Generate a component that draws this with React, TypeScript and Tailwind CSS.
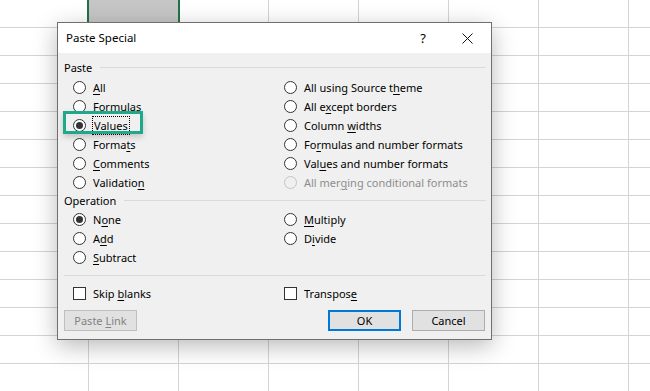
import React from "react";

const font = { fontFamily: '"Noto Sans", "Open Sans", sans-serif' };

function U({ children }: { children: React.ReactNode }) {
  return <span className="underline underline-offset-2 decoration-1">{children}</span>;
}

function Radio({ checked = false, disabled = false }: { checked?: boolean; disabled?: boolean }) {
  return (
    <span
      className={`flex h-[13px] w-[13px] shrink-0 items-center justify-center rounded-full border ${
        disabled ? "border-[#c4c4c4] bg-[#f0f0f0]" : "border-[#333333] bg-white"
      }`}
    >
      {checked && <span className="h-[7px] w-[7px] rounded-full bg-[#333333]" />}
    </span>
  );
}

function Opt({
  label,
  checked,
  disabled,
}: {
  label: React.ReactNode;
  checked?: boolean;
  disabled?: boolean;
}) {
  return (
    <div className={`flex h-[19px] items-center gap-[7px] ${disabled ? "text-[#8d8d8d]" : "text-black"}`}>
      <Radio checked={checked} disabled={disabled} />
      <span className="leading-none">{label}</span>
    </div>
  );
}

function Header({ label }: { label: string }) {
  return (
    <div className="flex h-[16px] items-center">
      <span className="leading-none">{label}</span>
      <span className="ml-[8px] h-px flex-1 bg-[#dadada]" />
    </div>
  );
}

function Check({ label }: { label: React.ReactNode }) {
  return (
    <div className="flex h-[18px] items-center gap-[7px]">
      <span className="h-[13px] w-[13px] shrink-0 border border-[#333333] bg-white" />
      <span className="leading-none">{label}</span>
    </div>
  );
}

export default function App() {
  const cols = [89, 90, 90, 90, 90, 90, 90, 90];
  const rows = 14;
  return (
    <div className="relative h-[391px] w-[650px] overflow-hidden bg-white text-[11px]" style={font}>
      {/* spreadsheet grid */}
      <div className="flex flex-col">
        {Array.from({ length: rows }).map((_, r) => (
          <div key={r} className="flex">
            {cols.map((w, c) => (
              <div
                key={c}
                className="h-[28px] shrink-0 border-b border-r border-[#d4d4d4]"
                style={{ width: w }}
              />
            ))}
          </div>
        ))}
      </div>

      {/* selected cell */}
      <div className="absolute left-[87px] top-[-10px] h-[40px] w-[93px] border-2 border-[#217346] bg-[#c6c6c6]" />

      {/* dialog */}
      <div className="absolute left-[57px] top-[22px] flex h-[318px] w-[435px] flex-col border border-[#6f6f6f] bg-[#f0f0f0] shadow-[0_6px_22px_rgba(0,0,0,0.28)]">
        {/* title bar */}
        <div className="flex h-[30px] items-center bg-white pl-[8px] text-black">
          <span className="text-[11.5px] leading-none">Paste Special</span>
          <span className="ml-auto mr-[36px] text-[13px] leading-none">?</span>
          <svg className="mr-[18px]" width="11" height="11" viewBox="0 0 11 11">
            <path d="M0.5 0.5 L10.5 10.5 M10.5 0.5 L0.5 10.5" stroke="#111" strokeWidth="1" />
          </svg>
        </div>

        {/* content */}
        <div className="relative flex flex-1 flex-col pl-[6px] pr-[5px] pt-[6px] text-black">
          <Header label="Paste" />
          <div className="mt-[3px] grid grid-cols-[211px_1fr] pl-[9px]">
            <div className="flex flex-col">
              <Opt label={<><U>A</U>ll</>} />
              <Opt label="Formulas" />
              <Opt
                checked
                label={
                  <span className="-mx-[1px] -my-[2px] border border-dotted border-black px-[1px] py-[1px]">
                    <U>V</U>alues
                  </span>
                }
              />
              <Opt label={<>Forma<U>t</U>s</>} />
              <Opt label={<><U>C</U>omments</>} />
              <Opt label={<>Validatio<U>n</U></>} />
            </div>
            <div className="flex flex-col">
              <Opt label={<>All using Source t<U>h</U>eme</>} />
              <Opt label={<>All e<U>x</U>cept borders</>} />
              <Opt label={<>Column <U>w</U>idths</>} />
              <Opt label={<>Fo<U>r</U>mulas and number formats</>} />
              <Opt label={<>Val<U>u</U>es and number formats</>} />
              <Opt disabled label={<>All mer<U>g</U>ing conditional formats</>} />
            </div>
          </div>

          <Header label="Operation" />
          <div className="mt-[2px] grid grid-cols-[211px_1fr] pl-[9px]">
            <div className="flex flex-col">
              <Opt checked label={<>N<U>o</U>ne</>} />
              <Opt label={<>A<U>d</U>d</>} />
              <Opt label={<><U>S</U>ubtract</>} />
            </div>
            <div className="flex flex-col">
              <Opt label={<><U>M</U>ultiply</>} />
              <Opt label={<>D<U>i</U>vide</>} />
            </div>
          </div>

          <div className="mt-[8px] h-px bg-[#dadada]" />

          <div className="mt-[8px] grid grid-cols-[211px_1fr] pl-[9px]">
            <Check label={<>Skip <U>b</U>lanks</>} />
            <Check label={<>Transpos<U>e</U></>} />
          </div>

          <div className="mt-[8px] flex h-[21px] items-stretch">
            <div className="flex w-[73px] items-center justify-center border border-[#bfbfbf] bg-[#e1e1e1] leading-none text-[#838383]">
              <span>Paste <U>L</U>ink</span>
            </div>
            <div className="ml-auto flex w-[73px] items-center justify-center border-2 border-[#0078d7] bg-[#e1e1e1] leading-none">
              OK
            </div>
            <div className="ml-[11px] mr-[1px] flex w-[73px] items-center justify-center border border-[#adadad] bg-[#e1e1e1] leading-none">
              Cancel
            </div>
          </div>

          {/* highlight annotation */}
          <div className="pointer-events-none absolute left-[5px] top-[58px] h-[23px] w-[80px] border-[3px] border-[#1fa98a] shadow-[0_3px_6px_rgba(0,0,0,0.18)]" />
        </div>
      </div>
    </div>
  );
}
